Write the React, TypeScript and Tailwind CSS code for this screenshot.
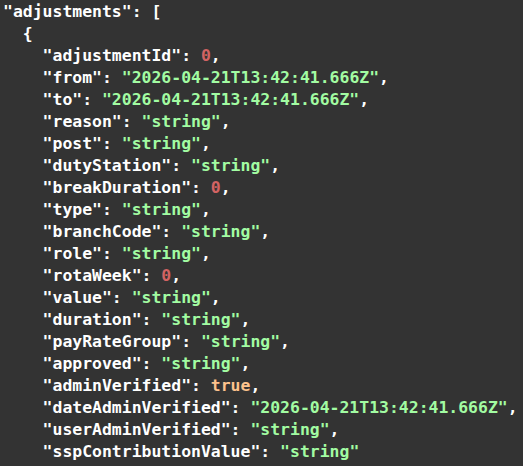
import React from "react";

type Tok = { t: string; c?: "s" | "n" | "b" };
const S = (t: string): Tok => ({ t, c: "s" });
const N = (t: string): Tok => ({ t, c: "n" });
const B = (t: string): Tok => ({ t, c: "b" });
const P = (t: string): Tok => ({ t });

const kv = (k: string, v: Tok, comma = true): Tok[] => [
  P(`    "${k}": `),
  v,
  P(comma ? "," : ""),
];

const lines: Tok[][] = [
  [P('"adjustments": [')],
  [P("  {")],
  kv("adjustmentId", N("0")),
  kv("from", S('"2026-04-21T13:42:41.666Z"')),
  kv("to", S('"2026-04-21T13:42:41.666Z"')),
  kv("reason", S('"string"')),
  kv("post", S('"string"')),
  kv("dutyStation", S('"string"')),
  kv("breakDuration", N("0")),
  kv("type", S('"string"')),
  kv("branchCode", S('"string"')),
  kv("role", S('"string"')),
  kv("rotaWeek", N("0")),
  kv("value", S('"string"')),
  kv("duration", S('"string"')),
  kv("payRateGroup", S('"string"')),
  kv("approved", S('"string"')),
  kv("adminVerified", B("true")),
  kv("dateAdminVerified", S('"2026-04-21T13:42:41.666Z"')),
  kv("userAdminVerified", S('"string"')),
  kv("sspContributionValue", S('"string"'), false),
];

const color = (c?: string) =>
  c === "s"
    ? "text-[#a2fca2]"
    : c === "n"
    ? "text-[#d36363]"
    : c === "b"
    ? "text-[#fcc28c]"
    : "text-white";

export default function App() {
  return (
    <div className="w-[523px] h-[466px] overflow-hidden bg-[#333333]">
      <pre
        className="m-0 pl-[3px] pt-[1px] font-bold text-[16.45px] leading-[22px] whitespace-pre"
        style={{ fontFamily: '"DejaVu Sans Mono", "Liberation Mono", monospace' }}
      >
        {lines.map((ln, i) => (
          <div key={i}>
            {ln.map((tk, j) => (
              <span key={j} className={color(tk.c)}>
                {tk.t}
              </span>
            ))}
          </div>
        ))}
      </pre>
    </div>
  );
}
